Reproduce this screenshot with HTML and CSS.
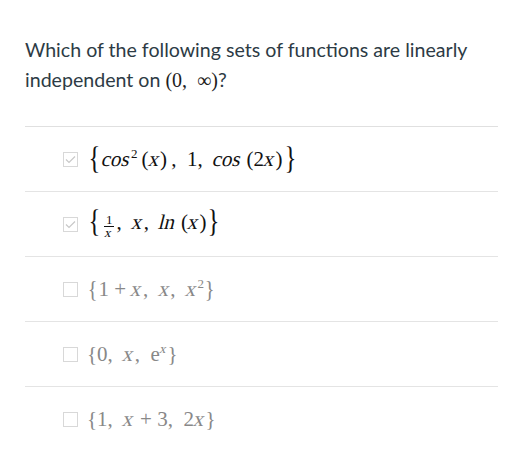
FILE: index.html
```html
<!DOCTYPE html>
<html>
<head>
<meta charset="utf-8">
<link rel="stylesheet" href="styles.css">
</head>
<body>
<div class="question">
  <p class="prompt">Which of the following sets of functions are linearly independent on <span class="m">(0,&nbsp; ∞)</span>?</p>
  <ul class="answers">
    <li class="answer checked">
      <span class="box"><svg width="11" height="9" viewBox="0 0 11 9"><path d="M1 4.5 L4 7.5 L10 1.5" fill="none" stroke="#c8c8c8" stroke-width="1.2"/></svg></span>
      <span class="m"><span class="big">{</span><i>cos</i><sup>2</sup>&thinsp;(<i>x</i>)&thinsp;,&nbsp; 1,&nbsp; <i>cos</i>&thinsp;(2<i>x</i>)<span class="big">}</span></span>
    </li>
    <li class="answer checked">
      <span class="box"><svg width="11" height="9" viewBox="0 0 11 9"><path d="M1 4.5 L4 7.5 L10 1.5" fill="none" stroke="#c8c8c8" stroke-width="1.2"/></svg></span>
      <span class="m"><span class="big">{</span><span class="frac"><span class="num">1</span><span class="den"><i>x</i></span></span>,&nbsp; <i>x</i>,&nbsp; <i>ln</i>&thinsp;(<i>x</i>)<span class="big">}</span></span>
    </li>
    <li class="answer">
      <span class="box"></span>
      <span class="m"><span class="mid">{</span>1 + <i>x</i>,&nbsp; <i>x</i>,&nbsp; <i>x</i><sup>2</sup><span class="mid">}</span></span>
    </li>
    <li class="answer">
      <span class="box"></span>
      <span class="m">{0,&nbsp; <i>x</i>,&nbsp; e<sup><i>x</i></sup>}</span>
    </li>
    <li class="answer last">
      <span class="box"></span>
      <span class="m">{1,&nbsp; <i>x</i> + 3,&nbsp; 2<i>x</i>}</span>
    </li>
  </ul>
</div>
</body>
</html>
```
FILE: styles.css
```css
html, body {
  margin: 0;
  padding: 0;
  background: #ffffff;
}
.question {
  padding: 35px 20px 0 25px;
  font-family: Lato, "Noto Sans", sans-serif;
  color: #2d3b45;
}
.prompt {
  margin: 0 0 31px 0;
  font-size: 19.6px;
  line-height: 30px;
}
.prompt .m {
  font-size: 20px;
  color: #1d1d1d;
}
.m {
  font-family: "Liberation Serif", "DejaVu Serif", serif;
  font-size: 21px;
  white-space: nowrap;
}
.m i {
  font-style: normal;
  display: inline-block;
  transform: skewX(-14deg);
  margin-right: 1px;
}
.m sup {
  font-size: 13px;
  vertical-align: 8px;
  line-height: 0;
}
.answers {
  list-style: none;
  margin: 0;
  padding: 0;
  border-top: 1px solid #e0e0e0;
}
.answer {
  height: 64px;
  display: flex;
  align-items: center;
  padding-left: 38px;
  border-bottom: 1px solid #e4e4e4;
  color: #888888;
}
.answer.last {
  border-bottom: none;
}
.answer.checked {
  color: #111111;
}
.box {
  width: 13px;
  height: 13px;
  border: 1px solid #d8d8d8;
  display: inline-flex;
  align-items: center;
  justify-content: center;
  margin-right: 9px;
  flex: none;
  background: #fff;
}
.big {
  font-size: 31px;
  display: inline-block;
  transform: scaleX(0.8);
  vertical-align: -3px;
  line-height: 0;
}
.mid {
  font-size: 24px;
  display: inline-block;
  transform: scaleX(0.85);
  vertical-align: -1px;
  line-height: 0;
}
.frac {
  display: inline-flex;
  flex-direction: column;
  align-items: center;
  vertical-align: 5px;
  font-size: 13px;
  line-height: 12px;
  margin: 0 2px;
}
.frac .num {
  border-bottom: 1px solid currentColor;
  padding: 0 2px;
}
```
